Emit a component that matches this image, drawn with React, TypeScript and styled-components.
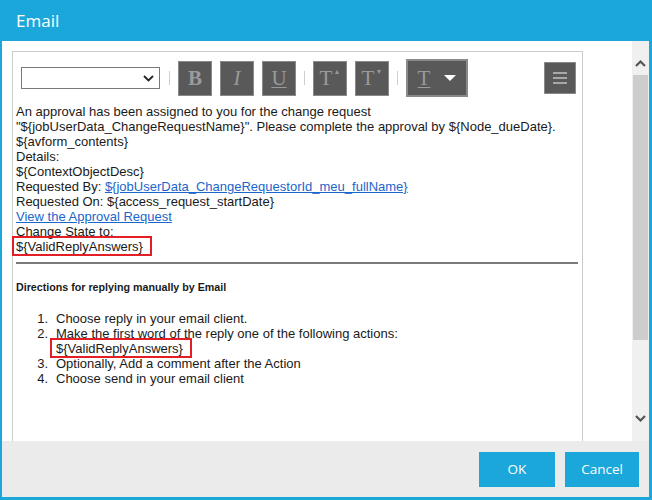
import styled, { createGlobalStyle } from "styled-components";

const GlobalStyle = createGlobalStyle`
  html, body {
    margin: 0;
    padding: 0;
  }
  body {
    width: 652px;
    height: 500px;
    overflow: hidden;
    background: #fff;
  }
`;

const Dialog = styled.div`
  width: 652px;
  height: 500px;
  box-sizing: border-box;
  background: #1ca7db;
  padding: 0 3px 3px 2px;
  display: flex;
  flex-direction: column;
`;

const TitleBar = styled.div`
  height: 41px;
  flex: none;
  display: flex;
  align-items: center;
  padding-left: 14px;
  color: #fff;
  font-family: "Open Sans", sans-serif;
  font-size: 17px;
`;

const Body = styled.div`
  flex: 1;
  display: flex;
  min-height: 0;
`;

const Content = styled.div`
  flex: 1;
  background: #fff;
  padding: 10px 0 0 10px;
  overflow: hidden;
  display: flex;
  flex-direction: column;
`;

const Editor = styled.div`
  width: 571px;
  flex: 1;
  box-sizing: border-box;
  border: 1px solid #cccccc;
  border-bottom: none;
`;

const Toolbar = styled.div`
  height: 52px;
  display: flex;
  align-items: center;
  padding: 0 6px 0 8px;
`;

const FontSelect = styled.div`
  width: 139px;
  height: 22px;
  box-sizing: border-box;
  border: 1px solid #7a7a7a;
  background: #fff;
  display: flex;
  align-items: center;
  justify-content: flex-end;
  padding-right: 5px;
  margin-right: 9px;
`;

const Separator = styled.div`
  width: 1px;
  height: 14px;
  background: #cfcfcf;
  margin-right: 8px;
`;

const ToolButton = styled.div<{ $w?: number; $h?: number; $thick?: boolean }>`
  width: ${(p) => p.$w ?? 34}px;
  height: ${(p) => p.$h ?? 35}px;
  box-sizing: border-box;
  background: #595959;
  border: ${(p) => (p.$thick ? 2 : 1)}px solid #8a8a8a;
  display: flex;
  align-items: center;
  justify-content: center;
  margin-right: 8px;
  color: #9a9a9a;
  font-family: "Liberation Serif", serif;
  font-size: 21px;
  line-height: 1;
`;

const MenuButton = styled(ToolButton)`
  margin-left: auto;
  margin-right: 0;
  flex-direction: column;
  gap: 3px;
`;

const MenuLine = styled.div`
  width: 14px;
  height: 2px;
  background: #a8a8a8;
`;

const Glyph = styled.span<{ $bold?: boolean; $italic?: boolean; $under?: boolean }>`
  font-weight: ${(p) => (p.$bold ? 700 : 400)};
  font-style: ${(p) => (p.$italic ? "italic" : "normal")};
  text-decoration: ${(p) => (p.$under ? "underline" : "none")};
  text-underline-offset: 2px;
  text-decoration-thickness: 1px;
  display: flex;
  align-items: flex-start;
`;

const Sup = styled.span`
  font-size: 7px;
  margin-left: 1px;
  margin-top: 1px;
`;

const Caret = styled.span`
  width: 0;
  height: 0;
  border-left: 6px solid transparent;
  border-right: 6px solid transparent;
  border-top: 6px solid #fff;
  margin-left: 14px;
`;

const Text = styled.div`
  padding: 0 3px;
  font-family: "Liberation Sans", Arial, sans-serif;
  font-size: 13px;
  line-height: 15px;
  color: #1a1a1a;
`;

const Link = styled.a`
  color: #1a66cc;
  text-decoration: underline;
`;

const Marked = styled.span<{ $lead: number }>`
  border: 2px solid #e31e24;
  padding: 1px 7px 0 ${(p) => p.$lead - 2}px;
  margin-left: -${(p) => p.$lead}px;
`;

const Rule = styled.div`
  height: 2px;
  background: #7a7a7a;
  margin: 8px 1px 0 0;
`;

const Heading = styled.div`
  font-weight: 700;
  font-size: 10.7px;
  line-height: 13px;
  margin-top: 17px;
`;

const Steps = styled.ol`
  margin: 17px 0 0 0;
  padding-left: 40px;
  list-style: none;
  counter-reset: step;
`;

const Step = styled.li`
  counter-increment: step;
  &::before {
    content: counter(step) ".";
    display: inline-block;
    width: 20px;
    margin: 0 8px 0 -28px;
    text-align: right;
  }
`;

const Scrollbar = styled.div`
  width: 17px;
  flex: none;
  background: #f0f0f0;
  display: flex;
  flex-direction: column;
  align-items: center;
`;

const ArrowArea = styled.div<{ $h: number; $up?: boolean }>`
  height: ${(p) => p.$h}px;
  width: 100%;
  flex: none;
  display: flex;
  justify-content: center;
  align-items: ${(p) => (p.$up ? "flex-end" : "flex-start")};
  padding: ${(p) => (p.$up ? "0 0 8px 0" : "10px 0 0 0")};
  box-sizing: border-box;
`;

const Thumb = styled.div`
  width: 15px;
  height: 265px;
  flex: none;
  background: #cdcdcd;
`;

const Track = styled.div`
  flex: 1;
`;

const Footer = styled.div`
  height: 56px;
  flex: none;
  background: #ebebeb;
  display: flex;
  justify-content: flex-end;
  align-items: center;
  gap: 10px;
  padding-right: 10px;
`;

const FooterButton = styled.button<{ $w: number }>`
  width: ${(p) => p.$w}px;
  height: 35px;
  border: none;
  padding: 0;
  background: #1ca7db;
  color: #fff;
  font-family: "Open Sans", sans-serif;
  font-size: 13.5px;
`;

const Chevron = ({ up }: { up?: boolean }) => (
  <svg width="11" height="7" viewBox="0 0 11 7">
    <polyline
      points={up ? "1,6 5.5,1.5 10,6" : "1,1 5.5,5.5 10,1"}
      fill="none"
      stroke="#555"
      strokeWidth="2.2"
    />
  </svg>
);

export default function App() {
  return (
    <>
      <GlobalStyle />
      <Dialog>
        <TitleBar>Email</TitleBar>
        <Body>
          <Content>
            <Editor>
              <Toolbar>
                <FontSelect>
                  <svg width="11" height="7" viewBox="0 0 11 7">
                    <polyline points="1,1 5.5,5.5 10,1" fill="none" stroke="#222" strokeWidth="1.8" />
                  </svg>
                </FontSelect>
                <Separator />
                <ToolButton>
                  <Glyph $bold>B</Glyph>
                </ToolButton>
                <ToolButton>
                  <Glyph $italic>I</Glyph>
                </ToolButton>
                <ToolButton>
                  <Glyph $under>U</Glyph>
                </ToolButton>
                <Separator />
                <ToolButton>
                  <Glyph>
                    T<Sup>▲</Sup>
                  </Glyph>
                </ToolButton>
                <ToolButton>
                  <Glyph>
                    T<Sup>▼</Sup>
                  </Glyph>
                </ToolButton>
                <Separator />
                <ToolButton $w={62} $h={38} $thick>
                  <Glyph $under>T</Glyph>
                  <Caret />
                </ToolButton>
                <MenuButton $w={32} $h={32}>
                  <MenuLine />
                  <MenuLine />
                  <MenuLine />
                </MenuButton>
              </Toolbar>
              <Text>
                An approval has been assigned to you for the change request
                <br />
                {'"${jobUserData_ChangeRequestName}". Please complete the approval by ${Node_dueDate}.'}
                <br />
                {"${avform_contents}"}
                <br />
                Details:
                <br />
                {"${ContextObjectDesc}"}
                <br />
                Requested By: <Link href="#">{"${jobUserData_ChangeRequestorId_meu_fullName}"}</Link>
                <br />
                Requested On: {"${access_request_startDate}"}
                <br />
                <Link href="#">View the Approval Request</Link>
                <br />
                Change State to:
                <br />
                <Marked $lead={4}>{"${ValidReplyAnswers}"}</Marked>
                <Rule />
                <Heading>Directions for replying manually by Email</Heading>
                <Steps>
                  <Step>Choose reply in your email client.</Step>
                  <Step>
                    Make the first word of the reply one of the following actions:
                    <br />
                    <Marked $lead={6}>{"${ValidReplyAnswers}"}</Marked>
                  </Step>
                  <Step>Optionally, Add a comment after the Action</Step>
                  <Step>Choose send in your email client</Step>
                </Steps>
              </Text>
            </Editor>
          </Content>
          <Scrollbar>
            <ArrowArea $h={34} $up>
              <Chevron up />
            </ArrowArea>
            <Thumb />
            <Track />
            <ArrowArea $h={36}>
              <Chevron />
            </ArrowArea>
          </Scrollbar>
        </Body>
        <Footer>
          <FooterButton $w={76}>OK</FooterButton>
          <FooterButton $w={74}>Cancel</FooterButton>
        </Footer>
      </Dialog>
    </>
  );
}
